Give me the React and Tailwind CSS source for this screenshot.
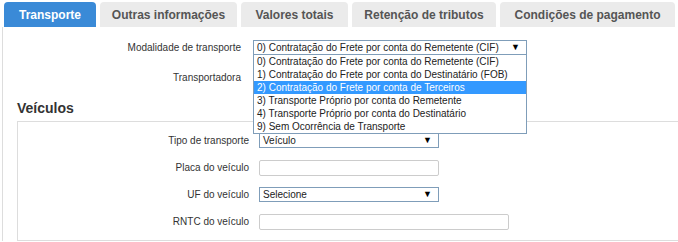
import React from 'react'

const tabs = [
  { t: 'Transporte', w: 'w-[92px]' },
  { t: 'Outras informações', w: 'w-[137px]' },
  { t: 'Valores totais', w: 'w-[107px]' },
  { t: 'Retenção de tributos', w: 'w-[144px]' },
  { t: 'Condições de pagamento', w: 'w-[175px]' },
]

const modalidades = [
  '0) Contratação do Frete por conta do Remetente (CIF)',
  '1) Contratação do Frete por conta do Destinatário (FOB)',
  '2) Contratação do Frete por conta de Terceiros',
  '3) Transporte Próprio por conta do Remetente',
  '4) Transporte Próprio por conta do Destinatário',
  '9) Sem Ocorrência de Transporte',
]

function Arrow() {
  return <span className="text-[9px] leading-none text-black">▼</span>
}

function FakeSelect({ value, width }) {
  return (
    <div className={`flex items-center justify-between h-[15px] border border-[#7f9db9] bg-white pl-[3px] pr-[6px] text-[10px] ${width}`}>
      <span className="leading-none whitespace-nowrap">{value}</span>
      <Arrow />
    </div>
  )
}

function Field({ label, children }) {
  return (
    <div className="flex items-center h-[27px]">
      <div className="w-[241px] text-right pr-[10px] text-[#333]">{label}</div>
      {children}
    </div>
  )
}

export default function App() {
  return (
    <div className="w-[678px] h-[242px] overflow-hidden bg-white text-[10px] text-[#222]" style={{ fontFamily: '"Liberation Sans", Arial, sans-serif' }}>
      {/* Tabs */}
      <div className="flex gap-[4px] pl-[4px] pt-[2px]">
        {tabs.map(({ t, w }, i) => (
          <div
            key={t}
            className={`h-[25px] flex items-center justify-center whitespace-nowrap rounded-t-[4px] text-[12px] font-bold ${w} ${
              i === 0 ? 'bg-[#3a8ad7] text-white' : 'bg-[#ebebeb] text-[#555]'
            }`}
          >
            {t}
          </div>
        ))}
      </div>

      {/* Panel */}
      <div className="ml-[2px] border-l border-[#ddd] pt-[13px]">
        <div className="flex items-center h-[15px]">
          <div className="w-[250px] text-right pr-[12px] text-[#333]">Modalidade de transporte</div>
          <div className="relative">
            <FakeSelect value={modalidades[0]} width="w-[274px]" />
            <div className="absolute left-0 top-[15px] w-[274px] border border-[#7f9db9] border-t-0 bg-white z-10 text-[10px]">
              {modalidades.map((m, i) => (
                <div
                  key={m}
                  className={`h-[13px] leading-[13px] pl-[3px] whitespace-nowrap ${i === 2 ? 'bg-[#3399ff] text-white' : ''}`}
                >
                  {m}
                </div>
              ))}
            </div>
          </div>
        </div>

        <div className="flex items-center h-[15px] mt-[15px]">
          <div className="w-[250px] text-right pr-[12px] text-[#333]">Transportadora</div>
        </div>

        <div className="pl-[14px] pt-[16px]">
          <h3 className="text-[14px] font-bold text-[#333] leading-none">Veículos</h3>
          <div className="mt-[6px] border border-[#ddd] border-r-0 h-[120px] pt-[5px]">
            <Field label="Tipo de transporte">
              <FakeSelect value="Veículo" width="w-[180px]" />
            </Field>
            <Field label="Placa do veículo">
              <div className="w-[180px] h-[16px] border border-[#ccc] rounded-[2px]" />
            </Field>
            <Field label="UF do veículo">
              <FakeSelect value="Selecione" width="w-[180px]" />
            </Field>
            <Field label="RNTC do veículo">
              <div className="w-[250px] h-[16px] border border-[#ccc] rounded-[2px]" />
            </Field>
          </div>
        </div>
      </div>
    </div>
  )
}
